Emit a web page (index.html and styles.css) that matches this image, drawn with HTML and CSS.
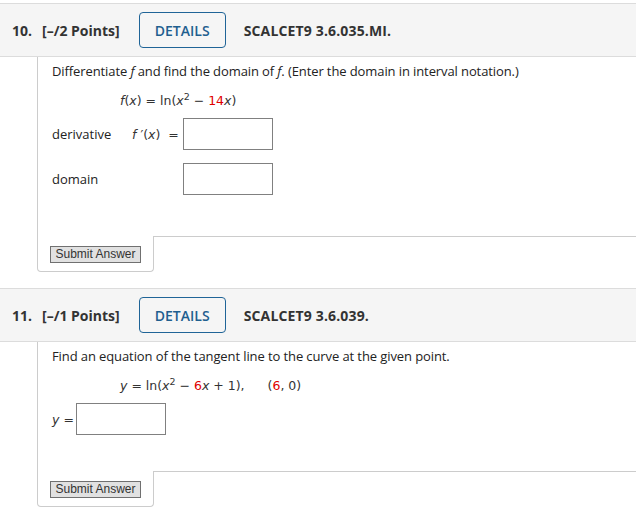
FILE: index.html
```html
<!DOCTYPE html>
<html lang="en">
<head>
<meta charset="utf-8">
<title>Questions</title>
<link rel="stylesheet" href="styles.css">
</head>
<body>
<div class="page">
  <section class="question">
    <header class="q-header">
      <span class="q-num">10.</span>
      <span class="q-points">[–/2 Points]</span>
      <button class="details-btn">DETAILS</button>
      <span class="q-code">SCALCET9 3.6.035.MI.</span>
    </header>
    <div class="q-content q-content--tall">
      <p class="prompt">Differentiate <i>f</i> and find the domain of <i>f</i>. (Enter the domain in interval notation.)</p>
      <p class="math math-display"><i>f</i>(<i>x</i>) = ln(<i>x</i><sup>2</sup> − <span class="red">14</span><i>x</i>)</p>
      <div class="answer-row">
        <span class="row-label">derivative</span>
        <span class="math row-expr"><i>f</i> ′(<i>x</i>) &nbsp;=</span>
        <input class="answer-box" type="text">
      </div>
      <div class="answer-row answer-row--spaced">
        <span class="row-label">domain</span>
        <span class="math row-expr"></span>
        <input class="answer-box" type="text">
      </div>
    </div>
    <div class="q-footer">
      <div class="submit-cell"><button class="submit-btn">Submit Answer</button></div>
      <div class="footer-fill"></div>
    </div>
  </section>

  <section class="question">
    <header class="q-header">
      <span class="q-num">11.</span>
      <span class="q-points">[–/1 Points]</span>
      <button class="details-btn">DETAILS</button>
      <span class="q-code">SCALCET9 3.6.039.</span>
    </header>
    <div class="q-content q-content--short">
      <p class="prompt">Find an equation of the tangent line to the curve at the given point.</p>
      <p class="math math-display"><i>y</i> = ln(<i>x</i><sup>2</sup> − <span class="red">6</span><i>x</i> + 1), <span class="point">(<span class="red">6</span>, 0)</span></p>
      <div class="answer-row answer-row--y">
        <span class="math y-label"><i>y</i> =</span>
        <input class="answer-box" type="text">
      </div>
    </div>
    <div class="q-footer">
      <div class="submit-cell"><button class="submit-btn">Submit Answer</button></div>
      <div class="footer-fill"></div>
    </div>
  </section>
</div>
</body>
</html>
```

FILE: styles.css
```css
* { box-sizing: border-box; }

html, body {
  margin: 0;
  padding: 0;
  background: #ffffff;
}

body {
  font-family: "Open Sans", "Noto Sans", sans-serif;
  color: #222;
}

.page {
  padding-top: 3px;
}

.question {
  margin-bottom: 16px;
}

.q-header {
  display: flex;
  align-items: center;
  height: 54px;
  padding-left: 12px;
  background: #f5f5f5;
  border-top: 1px solid #dcdcdc;
  border-bottom: 1px solid #dcdcdc;
  font-weight: 700;
  font-size: 14px;
  color: #333;
}

.q-num {
  margin-right: 10px;
}

.q-points {
  margin-right: 19px;
}

.details-btn {
  width: 87px;
  height: 36px;
  border: 1px solid #1f6497;
  border-radius: 4px;
  background: transparent;
  color: #1f5f8f;
  font-family: "Open Sans", "Noto Sans", sans-serif;
  font-size: 14px;
  font-weight: 600;
  padding: 0;
  margin-right: 18px;
}

.q-code {
  color: #333;
  letter-spacing: 0.15px;
}

.q-content {
  margin-left: 37px;
  border-left: 1px solid #cccccc;
  padding: 5px 0 0 14px;
  font-size: 13px;
}

.q-content--tall { padding-bottom: 41px; }
.q-content--short { padding-bottom: 36px; }

.prompt {
  margin: 0;
  line-height: 18px;
  letter-spacing: -0.1px;
}

.math {
  font-family: "DejaVu Sans", Verdana, sans-serif;
  font-size: 12.5px;
  color: #333;
}

.math i { font-style: italic; }

.math sup {
  font-size: 9.5px;
  line-height: 0;
  vertical-align: 5px;
}

.red { color: #e00000; }

.math-display {
  margin: 12px 0 0 68px;
  line-height: 18px;
}

.point {
  margin-left: 19px;
}

.answer-row {
  display: flex;
  align-items: center;
  margin-top: 8px;
}

.answer-row--spaced {
  margin-top: 13px;
}

.answer-row--y {
  margin-top: 8px;
}

.row-label {
  width: 80px;
  font-size: 13px;
}

.row-expr {
  width: 51px;
}

.y-label {
  margin-right: 2px;
}

.answer-box {
  width: 90px;
  height: 32px;
  border: 1px solid #808080;
  background: #fff;
  margin: 0;
  padding: 0 4px;
}

.q-footer {
  display: flex;
  align-items: flex-start;
}

.submit-cell {
  width: 117px;
  margin-left: 37px;
  padding: 10px 0 8px 12px;
  border: 1px solid #cccccc;
  border-top: none;
  border-radius: 0 0 4px 4px;
}

.submit-btn {
  display: block;
  width: 91px;
  height: 17px;
  padding: 0;
  border: 1px solid #707070;
  border-radius: 0;
  background: #e1e1e1;
  color: #333;
  font-family: "Liberation Sans", Arial, sans-serif;
  font-size: 12px;
  line-height: 15px;
}

.footer-fill {
  flex: 1;
  border-top: 1px solid #cccccc;
}
```
